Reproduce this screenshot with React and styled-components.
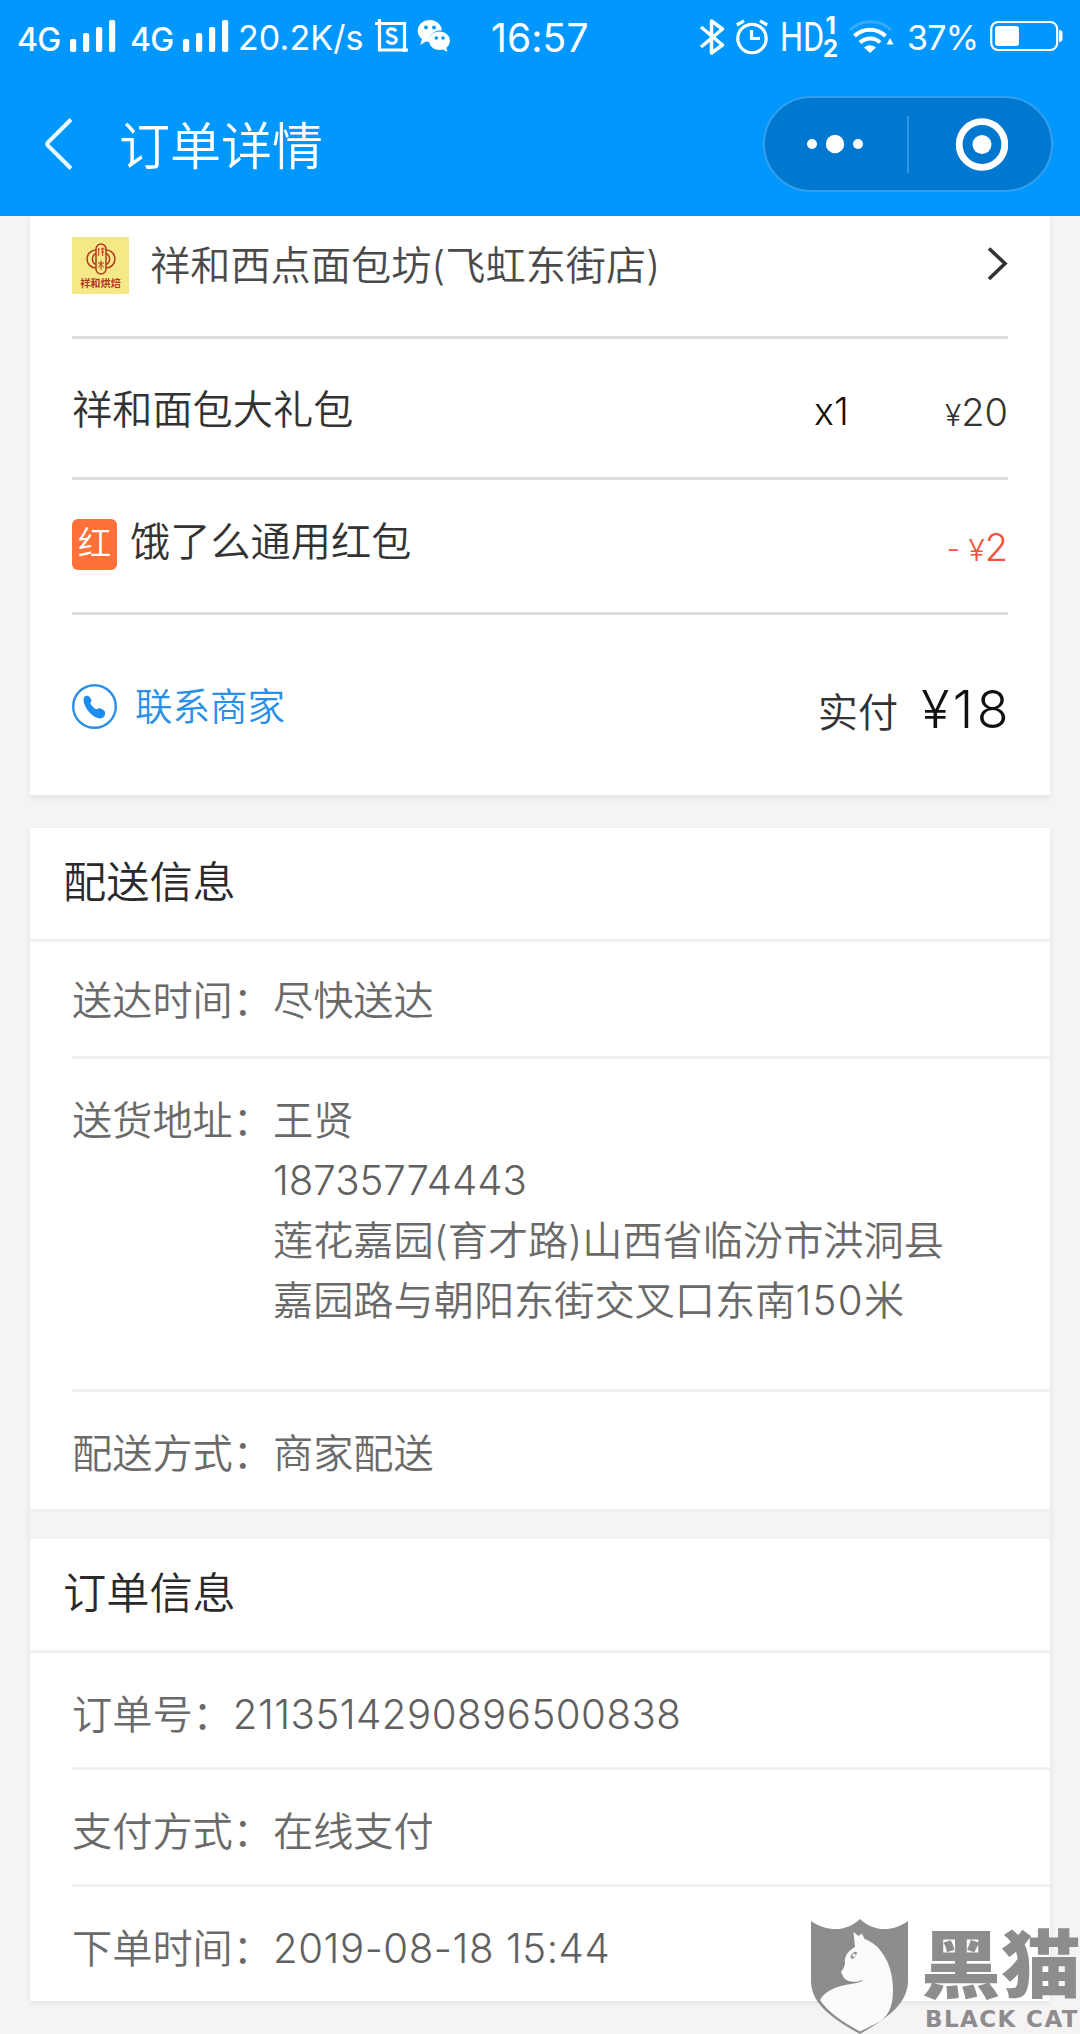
import React from "react";
import styled, { createGlobalStyle } from "styled-components";

const Global = createGlobalStyle`
  * { box-sizing: border-box; }
  html, body { margin: 0; padding: 0; background: #f5f3f4; }
  body { font-family: Inter, "Noto Sans CJK SC", sans-serif; font-weight: 350; }
  svg { display: block; flex: none; }
`;

const Page = styled.div`
  position: relative;
  width: 1080px;
  height: 2034px;
  overflow: hidden;
  background: #f5f3f4;
  display: flex;
  flex-direction: column;
`;

const Header = styled.header`
  height: 216px;
  flex: none;
  background: #0097ff;
  color: #fff;
`;

const StatusBar = styled.div`
  height: 72px;
  display: flex;
  align-items: flex-start;
  justify-content: space-between;
  padding: 0 17px 0 17px;
`;

const StatusGroup = styled.div`
  display: flex;
  height: 72px;
`;

const StatusText = styled.span`
  font-size: ${(p) => p.$size}px;
  font-weight: ${(p) => p.$weight || 400};
  letter-spacing: ${(p) => p.$track || 0}px;
  line-height: 40px;
  padding-top: ${(p) => p.$top}px;
  width: ${(p) => p.$w}px;
  white-space: nowrap;
`;

const NavBar = styled.div`
  height: 144px;
  display: flex;
  align-items: center;
  padding: 0 27px 0 45px;
`;

const NavTitle = styled.h1`
  margin: 0 auto 0 46px;
  font-size: 51px;
  font-weight: 350;
  line-height: 72px;
  padding-top: 5px;
`;

const Capsule = styled.div`
  width: 290px;
  height: 96px;
  border: 2px solid #339fee;
  border-radius: 48px;
  background: #0078cf;
  display: grid;
  grid-template-columns: 142px 2px 1fr;
  align-items: center;
  justify-items: center;
`;

const CapsuleRule = styled.i`
  width: 2px;
  height: 57px;
  background: #2f97e4;
`;

const Card = styled.section`
  margin: ${(p) => p.$mt || 0}px 30px 0;
  flex: none;
  background: #fff;
  box-shadow: 0 2px 5px 1px rgba(60, 60, 60, 0.07);
`;

const ShopCard = styled(Card)`
  height: 579px;
  padding: 0 42px;
  box-shadow: 0 3px 5px 1px rgba(60, 60, 60, 0.07);
`;

const ShopRow = styled.div`
  height: ${(p) => p.$h}px;
  padding-top: ${(p) => p.$pt}px;
  border-bottom: ${(p) => (p.$last ? "none" : "3px solid #dcdcdc")};
  display: flex;
  align-items: flex-start;
`;

const Label = styled.span`
  font-size: ${(p) => p.$size || 40.2}px;
  line-height: 56px;
  color: ${(p) => p.$color || "#333"};
  margin-left: ${(p) => p.$ml || 0}px;
  margin-right: auto;
  margin-top: ${(p) => p.$mt || 0}px;
  white-space: nowrap;
`;

const Quantity = styled.span`
  font-size: 37.5px;
  line-height: 56px;
  color: #111;
  width: 192px;
  padding-top: 2px;
`;

const Price = styled.span`
  font-size: 38px;
  font-weight: 300;
  line-height: 56px;
  padding-top: ${(p) => p.$pt || 0}px;
  color: ${(p) => p.$color || "#333"};
  white-space: pre;
  small { font-size: 30px; }
`;

const PaidLabel = styled.span`
  font-size: 40.2px;
  line-height: 56px;
  padding-top: 8px;
  color: #333;
`;

const Total = styled.strong`
  font-size: 52px;
  font-weight: 300;
  line-height: 64px;
  color: #111;
  letter-spacing: 3.5px;
  margin: 1px -4px 0 23px;
`;

const Badge = styled.span`
  width: 45px;
  height: 51px;
  border-radius: 6px;
  background: #ff7138;
  color: #fff;
  font-size: 33.5px;
  line-height: 48px;
  text-align: center;
`;

const ShopLogo = styled.div`
  width: 57px;
  height: 57px;
  background: #f5e987;
  color: #b23a1c;
  display: flex;
  flex-direction: column;
  align-items: center;
  padding-top: 6px;
`;

const LogoName = styled.span`
  font-size: 10.2px;
  font-weight: 700;
  line-height: 16px;
  white-space: nowrap;
`;

const SectionTitle = styled.h2`
  margin: 0;
  height: 114px;
  padding: 0 0 0 33px;
  font-size: 43.2px;
  font-weight: 350;
  line-height: 109px;
  color: #2a2a2a;
  border-bottom: 3px solid #f0eff0;
`;

const InfoRow = styled.div`
  margin-left: 42px;
  height: ${(p) => p.$h || 117}px;
  padding-top: ${(p) => p.$pt}px;
  border-bottom: ${(p) => (p.$last ? "none" : "3px solid #f1f1f1")};
  display: flex;
  font-size: 40.2px;
  line-height: 60px;
  color: #6a6a6a;
`;

const InfoValue = styled.span`
  white-space: nowrap;
`;

const Digits = styled.span`
  font-weight: 300;
  letter-spacing: ${(p) => p.$track || 0}px;
  color: #606060;
  white-space: nowrap;
`;

const Lines = styled.div`
  display: flex;
  flex-direction: column;
`;

const SectionGap = styled.div`
  height: 30px;
  background: #f5f4f5;
  border-top: 3px solid #f1f0f1;
`;

const Watermark = styled.div`
  position: absolute;
  right: 0;
  bottom: 0;
  width: 270px;
  height: 116px;
  display: flex;
  color: #8e8c8e;
`;

const WatermarkText = styled.div`
  margin-left: 16px;
  display: flex;
  flex-direction: column;
`;

const WatermarkName = styled.span`
  font-family: "Noto Sans CJK SC", sans-serif;
  font-weight: 900;
  font-size: 74px;
  line-height: 78px;
  padding-top: 3px;
  margin-left: -4px;
  white-space: nowrap;
  transform: scaleX(1.08);
  transform-origin: left center;
`;

const WatermarkLatin = styled.span`
  font-family: "DejaVu Sans", sans-serif;
  font-weight: 700;
  font-size: 23px;
  line-height: 24px;
  padding-top: 8px;
  letter-spacing: 1.4px;
  white-space: nowrap;
`;

const Pad = styled.span`
  padding-left: ${(p) => p.$l ?? 14}px;
`;

const ChevronRight = styled.svg`
  margin-top: 9px;
`;

const PhoneIcon = styled.svg`
  margin-top: 7px;
`;

const HdBadge = styled.div`
  width: 57px;
  margin-left: 11px;
  display: flex;
`;

const HdText = styled.span`
  width: 43px;
  font-family: Roboto, sans-serif;
  font-size: 40px;
  font-weight: 400;
  line-height: 40px;
  padding-top: 18px;
  transform: scaleX(0.81);
  transform-origin: left center;
`;

const SimIndex = styled.span`
  display: flex;
  flex-direction: column;
  padding-top: 14px;
  font-size: 24px;
  line-height: 23px;
  text-align: center;
  b { font-weight: 700; }
`;

const StatusIcon = styled.svg`
  margin-left: ${(p) => p.$ml || 0}px;
  margin-top: ${(p) => p.$mt || 0}px;
`;

const Signal = () => (
  <StatusIcon $mt={19} width="46" height="34" viewBox="0 0 46 34" fill="#fff">
    <rect x="0" y="20" width="6.2" height="13" rx="2" />
    <rect x="13" y="14" width="6.2" height="19" rx="2" />
    <rect x="26" y="8" width="6.2" height="25" rx="2" />
    <rect x="39" y="1" width="6.2" height="32" rx="2" />
  </StatusIcon>
);

export default function App() {
  return (
    <Page lang="zh-CN">
      <Global />
      <Header>
        <StatusBar>
          <StatusGroup>
            <StatusText $size={32} $weight={500} $w={53} $top={20} $track={-0.8}>4G</StatusText>
            <Signal />
            <StatusText $size={32} $weight={500} $w={67} $top={20} $track={-0.8}>
              <Pad>4G</Pad>
            </StatusText>
            <Signal />
            <StatusText $size={34} $w={135} $top={18} $track={0.1}>
              <Pad $l={9}>20.2K/s</Pad>
            </StatusText>
            <StatusIcon $ml={11} $mt={19} width="33" height="34" viewBox="0 0 33 34" fill="none" stroke="#fff" strokeWidth="3.2">
              <path d="M0 4.5H29.5V33M4.5 0V31H33" />
              <path d="M21 12.2C20 10.5 18.500 9.800 16.700 9.800C14.300 9.800 12.500 11 12.500 13.200C12.500 18.300 21.300 15.600 21.300 20.800C21.300 23 19.400 24.400 16.900 24.400C14.600 24.400 12.700 23.500 12 21.600" strokeWidth="3" />
            </StatusIcon>
            <StatusIcon $ml={9} $mt={19} width="34" height="34" viewBox="0 0 34 34">
              <path fill="#fff" d="M13 1C6 1 .7 5.700 .7 11.700c0 3.400 1.600 6.200 4.200 8.200L3.400 26l5.500-3.500c1.200 .3 2.300 .5 3.600 .4C11.400 17 16 11.500 25 11.300C24 5.200 19 1 13 1Z" />
              <path fill="#fff" d="M22.500 12.500c-6 0-10.400 4.100-10.400 9.200s4.400 9.200 10.400 9.200c1.300 0 2.400-.2 3.500-.5l4.500 2.600-1.200-4.200c2.200-1.700 3.600-4.200 3.600-7.100 0-5.100-4.500-9.200-10.400-9.200Z" />
              <g fill="#0097ff">
                <circle cx="9" cy="8.500" r="1.900" /><circle cx="17" cy="8.500" r="1.900" />
                <circle cx="19.300" cy="19" r="1.800" /><circle cx="26" cy="19" r="1.800" />
              </g>
            </StatusIcon>
            <StatusText $size={39} $w={145} $top={18} $track={0.1}>
              <Pad $l={40}>16:57</Pad>
            </StatusText>
          </StatusGroup>
          <StatusGroup>
            <StatusIcon $mt={18} width="26" height="38" viewBox="0 0 26 38" fill="none" stroke="#fff" strokeWidth="3.500" strokeLinejoin="round">
              <path d="M2 9L23.500 27L12.500 35V3L23.500 11L2 29" />
            </StatusIcon>
            <StatusIcon $ml={10} $mt={18} width="34" height="38" viewBox="0 0 34 38" fill="none" stroke="#fff" strokeWidth="3.200">
              <circle cx="17" cy="20.500" r="14.200" />
              <path d="M1.800 7L9 2.800M32.200 7L25 2.800M16.500 12V20.500H25" />
            </StatusIcon>
            <HdBadge>
              <HdText>HD</HdText>
              <SimIndex><b>1</b><b>2</b></SimIndex>
            </HdBadge>
            <StatusIcon $ml={11} $mt={19} width="46" height="36" viewBox="0 0 46 36" fill="none" stroke="#fff" strokeWidth="4">
              <path d="M2 11C13 0 32 0 43 11" stroke="#36abff" strokeWidth="3" />
              <path d="M6.500 17C15 8.500 29 8.500 37.500 17M12 23.500C18 18 27 18 32 23.500" />
              <path d="M16 28.500Q22 24 28 28.500L22 34Z" fill="#fff" stroke="none" />
              <path d="M38.500 25.500L42 19L45.500 25.500Z" fill="#fff" stroke="none" />
            </StatusIcon>
            <StatusText $size={34} $w={96} $top={18} $track={-0.7}>
              <Pad $l={13}>37%</Pad>
            </StatusText>
            <StatusIcon $mt={20} width="73" height="32" viewBox="0 0 73 32">
              <rect x="1.200" y="2" width="66" height="28" rx="7" fill="none" stroke="#fff" strokeWidth="2.200" />
              <rect x="5" y="6" width="24" height="20" rx="3" fill="#fff" />
              <path d="M69 10Q72.500 10 72.500 13V19Q72.500 22 69 22Z" fill="#fff" />
            </StatusIcon>
          </StatusGroup>
        </StatusBar>
        <NavBar>
          <svg width="28" height="52" viewBox="0 0 28 52" fill="none" stroke="#e9fbff" strokeWidth="4">
            <path d="M26 1.500L2.800 24.500Q1.800 26 2.800 27.500L26 50.500" />
          </svg>
          <NavTitle>订单详情</NavTitle>
          <Capsule>
            <svg width="60" height="20" viewBox="0 0 60 20" fill="#fff">
              <circle cx="6" cy="10" r="5" /><circle cx="29" cy="10" r="9.200" /><circle cx="52" cy="10" r="5" />
            </svg>
            <CapsuleRule />
            <svg width="56" height="54" viewBox="0 0 56 54">
              <circle cx="30" cy="27.500" r="22.800" fill="none" stroke="#fff" strokeWidth="6.800" />
              <circle cx="30" cy="27.500" r="9.500" fill="#fff" />
            </svg>
          </Capsule>
        </NavBar>
      </Header>

      <ShopCard>
        <ShopRow $h={123} $pt={21}>
          <ShopLogo>
            <svg width="30" height="32" viewBox="0 0 30 32" fill="none" stroke="#b23a1c" strokeWidth="1.500">
              <rect x="10" y="1" width="10" height="30" rx="5" />
              <path d="M10 7A9 9 0 0 0 10 25M20 7A9 9 0 0 1 20 25" />
              <path d="M10 10.500A6 6 0 0 0 10 21.500M20 10.500A6 6 0 0 1 20 21.500" />
              <path d="M12 6.500H13.500M12.700 5V13M15 6H18.500M16.700 4.500V13M15 9H18M12 20H18M15 17.500V27M15 20.500L12.500 24.500M15 20.500L17.500 24.500" strokeWidth="1" />
            </svg>
            <LogoName>祥和烘焙</LogoName>
          </ShopLogo>
          <Label $ml={21} $mt={1} $color="#4a4a4a">祥和西点面包坊(飞虹东街店)</Label>
          <ChevronRight width="22" height="36" viewBox="0 0 22 36" fill="none" stroke="#333" strokeWidth="3.600">
            <path d="M3 2.500L19 17.500L3 33" />
          </ChevronRight>
        </ShopRow>
        <ShopRow $h={141} $pt={43}>
          <Label>祥和面包大礼包</Label>
          <Quantity><Pad $l={61}>x1</Pad></Quantity>
          <Price $pt={2}><small>¥</small>20</Price>
        </ShopRow>
        <ShopRow $h={135} $pt={39}>
          <Badge>红</Badge>
          <Label $ml={13} $mt={-5}>饿了么通用红包</Label>
          <Price $color="#f0543c"><small>- ¥</small>2</Price>
        </ShopRow>
        <ShopRow $h={180} $pt={62} $last>
          <PhoneIcon width="45" height="45" viewBox="0 0 45 45">
            <circle cx="22.500" cy="22.500" r="21.300" fill="none" stroke="#2b8fe6" strokeWidth="2.400" />
            <path fill="#1c8df0" d="M12.500 12.800C14.500 11 16.500 11.700 18 13.500C19.800 15.700 19.800 17 18.500 18.500C18.200 19.400 19 20.800 20.500 22.500C22.200 24.300 23.600 25.400 24.800 25.200C26.500 23.900 28 23.800 30.300 25.300C33 27 33.800 28.500 32.800 31.200C31.500 34 29 34.800 26.500 34.300C22.800 33.600 18.500 30.500 15.300 25.800C12.300 21.500 10.300 15.500 12.500 12.800Z" />
          </PhoneIcon>
          <Label $ml={18} $mt={2} $size={37.5} $color="#2b8fe6">联系商家</Label>
          <PaidLabel>实付</PaidLabel>
          <Total>¥18</Total>
        </ShopRow>
      </ShopCard>

      <Card $mt={33}>
        <SectionTitle>配送信息</SectionTitle>
        <InfoRow $pt={29}>
          <span>送达时间：</span>
          <InfoValue>尽快送达</InfoValue>
        </InfoRow>
        <InfoRow $h={333} $pt={32}>
          <span>送货地址：</span>
          <Lines>
            <InfoValue>王贤</InfoValue>
            <Digits>18735774443</Digits>
            <InfoValue>莲花嘉园(育才路)山西省临汾市洪洞县</InfoValue>
            <InfoValue>嘉园路与朝阳东街交叉口东南<Digits $track={1.4}>150</Digits>米</InfoValue>
          </Lines>
        </InfoRow>
        <InfoRow $pt={32} $last>
          <span>配送方式：</span>
          <InfoValue>商家配送</InfoValue>
        </InfoRow>
        <SectionGap />
        <SectionTitle>订单信息</SectionTitle>
        <InfoRow $pt={32}>
          <span>订单号：</span>
          <Digits $track={0.5}>2113514290896500838</Digits>
        </InfoRow>
        <InfoRow $pt={32}>
          <span>支付方式：</span>
          <InfoValue>在线支付</InfoValue>
        </InfoRow>
        <InfoRow $h={114} $pt={32} $last>
          <span>下单时间：</span>
          <Digits $track={0.55}>2019-08-18 15:44</Digits>
        </InfoRow>
      </Card>

      <Watermark>
        <svg width="99" height="116" viewBox="0 0 99 116">
          <path fill="#8e8c8e" d="M1 3C18 15 38 13 50 1C62 13 82 15 98 3V63C98 88 72 103 50 116C27 103 1 88 1 63Z" />
          <path fill="#fbfbfb" d="M43.500 14L48.500 18L52 15.500L54.500 21C72 27 83 48 83 71C83 87 80 95 71 103L50 113.500C32 104 17 93 10 82C16 71 29 68 41 66C49 65 53 63 53 62C46 65 37 64 34 60L31 54C33 51 34 50 35 46C34 38 38 33 45 29Z" />
          <path fill="#8e8c8e" d="M40.500 38.500Q43 33 47 34Q46 40 41.500 41Z" />
          <circle cx="44" cy="37.200" r="1.600" fill="#fff" />
        </svg>
        <WatermarkText>
          <WatermarkName>黑猫</WatermarkName>
          <WatermarkLatin>BLACK CAT</WatermarkLatin>
        </WatermarkText>
      </Watermark>
    </Page>
  );
}
